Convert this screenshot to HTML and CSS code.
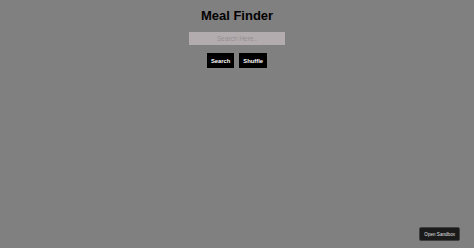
FILE: index.html
```html
<!DOCTYPE html>
<html>
<head>
<meta charset="utf-8">
<link rel="stylesheet" href="styles.css">
</head>
<body>
<main class="app">
  <h1 class="title">Meal Finder</h1>
  <div class="search-row">
    <input class="search-input" type="text" placeholder="Search Here..">
  </div>
  <div class="actions">
    <button class="btn">Search</button>
    <button class="btn">Shuffle</button>
  </div>
</main>
<button class="sandbox">Open Sandbox</button>
</body>
</html>
```

FILE: styles.css
```css
html, body {
  margin: 0;
  padding: 0;
  height: 100%;
}
body {
  background: #808080;
  font-family: "Liberation Sans", Arial, sans-serif;
  position: relative;
}
.app {
  display: flex;
  flex-direction: column;
  align-items: center;
  padding-top: 7px;
}
.title {
  margin: 0;
  font-size: 13px;
  line-height: 17px;
  font-weight: bold;
  color: #000;
}
.search-row {
  margin-top: 8px;
  display: flex;
}
.search-input {
  box-sizing: border-box;
  width: 96px;
  height: 13px;
  border: none;
  padding: 0;
  background: #b3acaf;
  font-family: "Liberation Sans", Arial, sans-serif;
  font-size: 6.5px;
  text-align: center;
  outline: none;
}
.search-input::placeholder {
  color: #948d90;
}
.actions {
  margin-top: 8px;
  display: flex;
  gap: 5px;
}
.btn {
  box-sizing: border-box;
  height: 15px;
  padding: 0 4px;
  border: none;
  background: #000;
  color: #fff;
  font-family: "Liberation Sans", Arial, sans-serif;
  font-size: 5.8px;
  font-weight: bold;
}
.sandbox {
  position: absolute;
  right: 14px;
  bottom: 7px;
  box-sizing: border-box;
  height: 14px;
  padding: 0 4px;
  background: #1a1a1a;
  border: 1px solid #404040;
  border-radius: 2px;
  color: #e0e0e0;
  font-family: "Liberation Sans", Arial, sans-serif;
  font-size: 4.6px;
}
```
